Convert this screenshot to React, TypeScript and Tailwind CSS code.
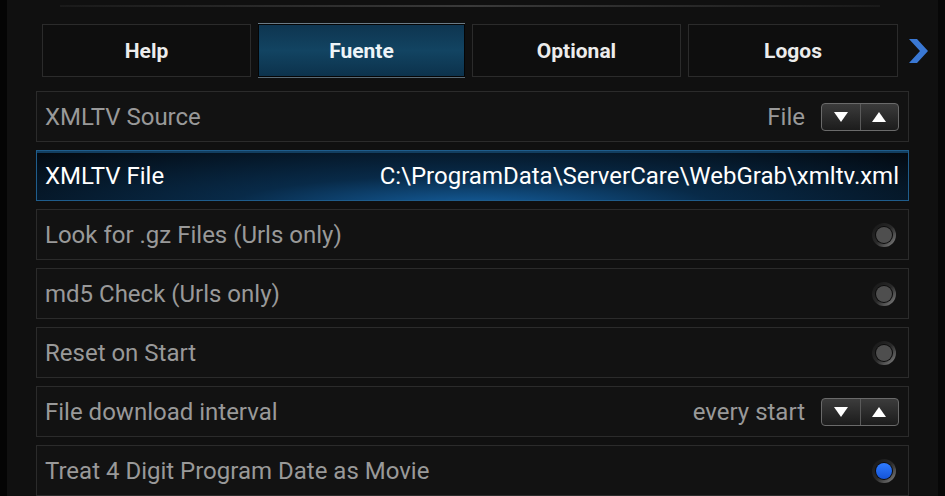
import React from "react";

const font = { fontFamily: "Roboto, 'Noto Sans', sans-serif" };

type Row =
  | { label: string; kind: "spin"; value: string }
  | { label: string; kind: "text"; value: string; focused?: boolean }
  | { label: string; kind: "radio"; on: boolean };

const rows: Row[] = [
  { label: "XMLTV Source", kind: "spin", value: "File" },
  { label: "XMLTV File", kind: "text", value: "C:\\ProgramData\\ServerCare\\WebGrab\\xmltv.xml", focused: true },
  { label: "Look for .gz Files (Urls only)", kind: "radio", on: false },
  { label: "md5 Check (Urls only)", kind: "radio", on: false },
  { label: "Reset on Start", kind: "radio", on: false },
  { label: "File download interval", kind: "spin", value: "every start" },
  { label: "Treat 4 Digit Program Date as Movie", kind: "radio", on: true },
];

const tabs = [
  { name: "Help", w: "w-[209px]" },
  { name: "Fuente", w: "w-[207px]" },
  { name: "Optional", w: "w-[209px]" },
  { name: "Logos", w: "w-[210px]" },
];

function Spinner() {
  return (
    <div className="flex h-[28px] w-[78px] overflow-hidden rounded-[4px] border border-[#6a6a6a] bg-gradient-to-b from-[#3c3c3c] to-[#1c1c1c]">
      <div className="flex flex-1 items-center justify-center border-r border-[#5a5a5a]">
        <svg width="16" height="12" viewBox="0 0 16 12">
          <path d="M1 1h14L8 11z" fill="#fff" />
        </svg>
      </div>
      <div className="flex flex-1 items-center justify-center">
        <svg width="16" height="12" viewBox="0 0 16 12">
          <path d="M1 11h14L8 1z" fill="#fff" />
        </svg>
      </div>
    </div>
  );
}

function Radio({ on }: { on: boolean }) {
  return (
    <div className="flex h-[24px] w-[24px] items-center justify-center rounded-full bg-gradient-to-br from-[#151515] via-[#2a2a2a] to-[#8a8a8a]">
      <div className="h-[18px] w-[18px] rounded-full bg-[#0c0c0c] p-[1px]">
        <div
          className={
            on
              ? "h-full w-full rounded-full bg-gradient-to-b from-[#2f7bff] to-[#1553d6]"
              : "h-full w-full rounded-full bg-[#4e4e4e]"
          }
        />
      </div>
    </div>
  );
}

export default function App() {
  return (
    <div className="flex h-[496px] w-[945px] overflow-hidden bg-[#101010]" style={font}>
      <div className="w-[7px] shrink-0 bg-[#040404]" />
      <div className="relative flex flex-1 flex-col">
        <div className="ml-[53px] mt-[5px] h-[2px] w-[820px] bg-gradient-to-r from-[#1a1a1a] via-[#3a3a3a] to-[#1a1a1a]" />
        <div className="ml-[35px] mt-[17px] flex h-[53px] items-center gap-[7px]">
          {tabs.map((t) => (
            <div
              key={t.name}
              className={
                t.name === "Fuente"
                  ? `flex h-full ${t.w} items-center justify-center border border-[#050505] bg-gradient-to-b from-[#0e3550] via-[#124462] to-[#0c324c] pt-[3px] text-[21px] font-bold text-[#eef4f8] shadow-[0_-1px_0_#6b7b86,0_1px_0_#5a6a75]`
                  : `flex h-full ${t.w} items-center justify-center border border-[#2b2b2b] bg-[#0e0e0e] pt-[3px] text-[21px] font-bold text-[#ececec]`
              }
            >
              {t.name}
            </div>
          ))}
          <svg width="24" height="26" viewBox="0 0 24 26" className="ml-[1px]">
            <path d="M3 1h8l11 12-11 12H3l11-12z" fill="#3a78d4" />
          </svg>
        </div>
        <div className="ml-[29px] mt-[14px] flex w-[873px] flex-col gap-[8px]">
          {rows.map((r) => {
            const focused = r.kind === "text" && r.focused;
            return (
              <div
                key={r.label}
                className={
                  focused
                    ? "flex h-[51px] items-center border border-[#1f5d8c] bg-[radial-gradient(ellipse_at_50%_115%,#1560a0_0%,#082a48_40%,#03080e_100%)] pl-[8px] pr-[9px] text-[24px] text-white shadow-[inset_0_2px_0_#123e60]"
                    : "flex h-[51px] items-center border border-[#2b2b2b] bg-[#121212] pl-[8px] pr-[9px] text-[24px] text-[#999999]"
                }
              >
                <span className="flex-1 whitespace-nowrap">{r.label}</span>
                {r.kind === "spin" && (
                  <div className="flex items-center gap-[16px]">
                    <span>{r.value}</span>
                    <Spinner />
                  </div>
                )}
                {r.kind === "text" && <span className="whitespace-nowrap">{r.value}</span>}
                {r.kind === "radio" && (
                  <div className="mr-[3px]">
                    <Radio on={r.on} />
                  </div>
                )}
              </div>
            );
          })}
        </div>
      </div>
      <div className="w-[7px] shrink-0 bg-[#070707]" />
    </div>
  );
}
